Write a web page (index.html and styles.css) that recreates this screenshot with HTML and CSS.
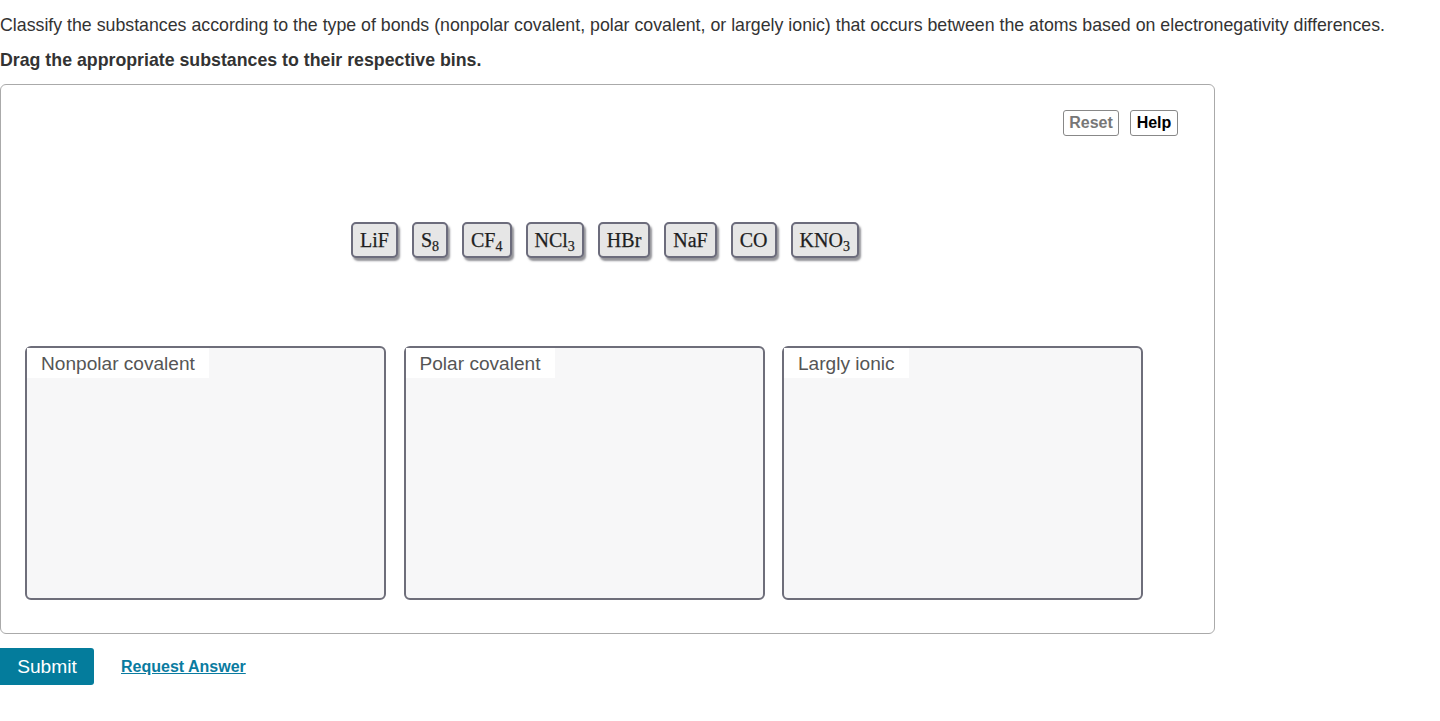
FILE: index.html
```html
<!DOCTYPE html>
<html>
<head>
<meta charset="utf-8">
<link rel="stylesheet" href="styles.css">
</head>
<body>
<p class="intro">Classify the substances according to the type of bonds (nonpolar covalent, polar covalent, or largely ionic) that occurs between the atoms based on electronegativity differences.</p>
<p class="instr">Drag the appropriate substances to their respective bins.</p>
<div class="board">
  <div class="tools">
    <button class="tbtn reset">Reset</button>
    <button class="tbtn help">Help</button>
  </div>
  <div class="chips">
    <span class="chip">LiF</span>
    <span class="chip">S<sub>8</sub></span>
    <span class="chip">CF<sub>4</sub></span>
    <span class="chip">NCl<sub>3</sub></span>
    <span class="chip">HBr</span>
    <span class="chip">NaF</span>
    <span class="chip">CO</span>
    <span class="chip">KNO<sub>3</sub></span>
  </div>
  <div class="bins">
    <div class="bin"><span class="label">Nonpolar covalent</span></div>
    <div class="bin"><span class="label">Polar covalent</span></div>
    <div class="bin"><span class="label">Largly ionic</span></div>
  </div>
</div>
<div class="actions">
  <button class="submit">Submit</button>
  <a class="req" href="#">Request Answer</a>
</div>
</body>
</html>
```
FILE: styles.css
```css
html, body {
  margin: 0;
  padding: 0;
  background: #fff;
}
body {
  font-family: "Liberation Sans", Arial, sans-serif;
  font-size: 16px;
  color: #333;
}
.intro {
  margin: 0;
  padding-top: 14px;
  line-height: 22px;
  font-size: 17.75px;
}
.instr {
  margin: 13px 0 0 0;
  line-height: 22px;
  font-size: 17.75px;
  font-weight: bold;
}
.board {
  margin-top: 13px;
  width: 1213px;
  height: 548px;
  border: 1px solid #aaa;
  border-radius: 6px;
  box-sizing: content-box;
  display: flex;
  flex-direction: column;
}
.tools {
  display: flex;
  justify-content: flex-end;
  gap: 11px;
  padding: 25px 36px 0 0;
}
.tbtn {
  font-family: "Liberation Sans", Arial, sans-serif;
  font-weight: bold;
  font-size: 16px;
  height: 26px;
  padding: 0 5px;
  background: #fff;
  border: 1px solid #888;
  border-radius: 3px;
  line-height: 24px;
}
.reset { color: #777; width: 56px; }
.help { color: #000; width: 48px; }
.chips {
  display: flex;
  gap: 14px;
  padding: 86px 0 0 350px;
}
.chip {
  font-family: "Liberation Serif", "Times New Roman", serif;
  font-size: 20px;
  color: #1f1f1f;
  background: #e6e6e6;
  border: 2px solid #6c6c7c;
  border-radius: 5px;
  height: 32px;
  line-height: 32px;
  padding: 0 7px;
  box-shadow: 2px 3px 2px rgba(60, 60, 70, 0.55);
  -webkit-text-stroke: 0.25px #1f1f1f;
}
.chip sub {
  font-size: 14px;
  vertical-align: -4px;
  line-height: 0;
}
.bins {
  display: flex;
  gap: 17.5px;
  padding: 88px 0 0 24px;
}
.bin {
  width: 357px;
  height: 250px;
  border: 2px solid #6e6e7a;
  border-radius: 6px;
  background: #f7f7f8;
}
.label {
  display: inline-block;
  background: #fff;
  color: #555;
  font-size: 19.1px;
  line-height: 28px;
  padding: 2px 14px 0 14px;
}
.actions {
  display: flex;
  align-items: center;
  gap: 27px;
  margin-top: 14px;
}
.submit {
  font-family: "Liberation Sans", Arial, sans-serif;
  font-size: 19.2px;
  color: #fff;
  background: #047c9c;
  border: none;
  border-radius: 0 3px 3px 0;
  width: 94px;
  height: 37px;
  padding: 0;
}
.req {
  font-weight: bold;
  font-size: 16px;
  color: #0a7ba0;
  text-decoration: underline;
}
```
